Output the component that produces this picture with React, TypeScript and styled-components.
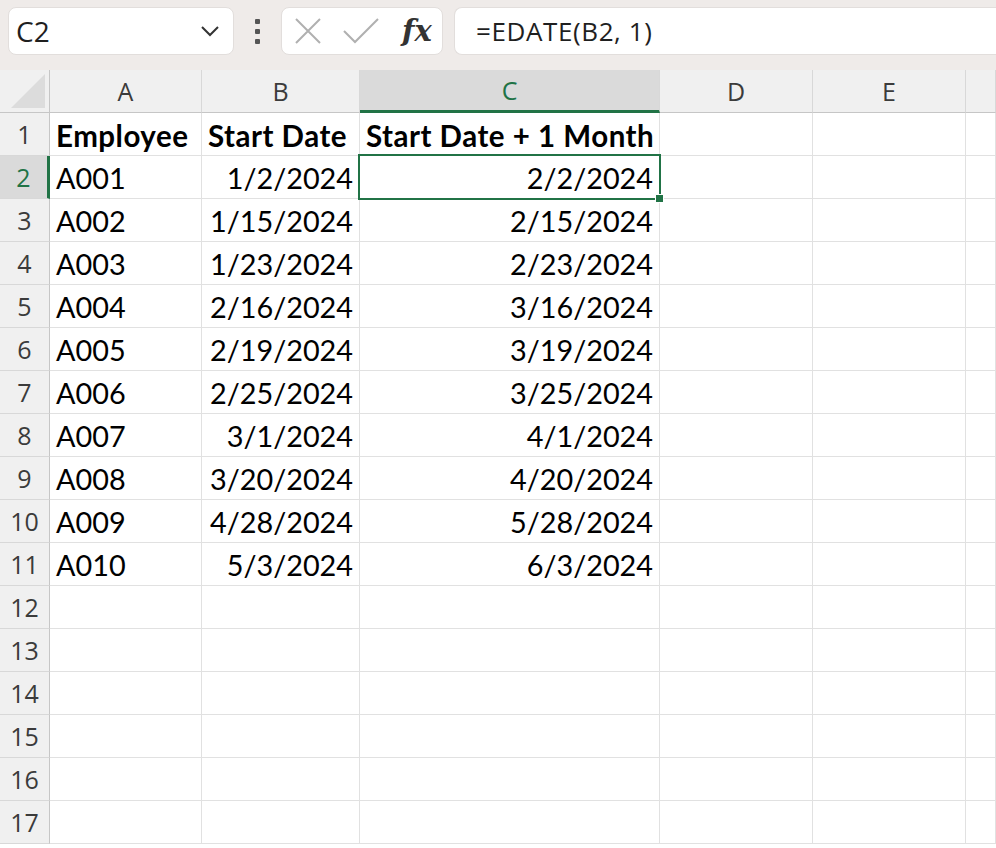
import React from 'react';
import styled, { createGlobalStyle } from 'styled-components';

const GlobalStyle = createGlobalStyle`
  html, body {
    margin: 0;
    padding: 0;
    background: #ffffff;
    overflow: hidden;
  }
  body {
    font-family: 'Open Sans', 'Noto Sans', sans-serif;
  }
`;

const GREEN = '#217346';
const COLS = '50px 152px 158px 300px 153px 153px 30px';

const Page = styled.div`
  width: 996px;
  height: 848px;
  overflow: hidden;
  background: #fff;
`;

const Toolbar = styled.div`
  display: flex;
  align-items: center;
  height: 70px;
  padding: 0 0 8px 8px;
  box-sizing: border-box;
  background: #efebe9;
`;

const Box = styled.div<{ $w?: number }>`
  display: flex;
  align-items: center;
  height: 48px;
  width: ${(p) => (p.$w ? `${p.$w}px` : 'auto')};
  flex: ${(p) => (p.$w ? 'none' : '1')};
  box-sizing: border-box;
  background: #fff;
  border: 1px solid #e2dedc;
  border-radius: 8px;
`;

const NameBox = styled(Box)`
  justify-content: space-between;
  padding: 0 12px 0 7px;
  font-size: 28px;
  color: #1f1f1f;
`;

const Dots = styled.div`
  width: 47px;
  display: flex;
  flex-direction: column;
  align-items: center;
  gap: 5px;
  span {
    width: 5px;
    height: 5px;
    background: #555;
    border-radius: 1px;
  }
`;

const FxBox = styled(Box)`
  padding: 0 10px 0 12px;
  gap: 20px;
  margin-right: 11px;
`;

const FormulaBox = styled(Box)`
  border-right: none;
  border-radius: 8px 0 0 8px;
  padding-left: 21px;
  font-size: 26px;
  letter-spacing: 0.6px;
  color: #1f1f1f;
`;

const FxLabel = styled.span`
  font-family: 'DejaVu Serif', 'Liberation Serif', serif;
  font-style: italic;
  font-weight: bold;
  font-size: 29px;
  color: #333;
  margin-left: 2px;
`;

const Grid = styled.div`
  display: grid;
  grid-template-columns: ${COLS};
  grid-auto-rows: 43px;
`;

const Corner = styled.div`
  background: #f0f0f0;
  border-right: 1px solid #c6c6c6;
  border-bottom: 1px solid #c6c6c6;
  position: relative;
  &::after {
    content: '';
    position: absolute;
    right: 4px;
    bottom: 4px;
    width: 0;
    height: 0;
    border-left: 34px solid transparent;
    border-bottom: 34px solid #dcdcdc;
  }
`;

const ColHead = styled.div<{ $active?: boolean }>`
  display: flex;
  align-items: center;
  justify-content: center;
  background: ${(p) => (p.$active ? '#dadada' : '#f0f0f0')};
  border-right: 1px solid #d8d8d8;
  border-bottom: ${(p) => (p.$active ? `3px solid ${GREEN}` : '1px solid #c6c6c6')};
  box-sizing: border-box;
  font-size: 25px;
  color: ${(p) => (p.$active ? GREEN : '#3b3b3b')};
`;

const RowHead = styled.div<{ $active?: boolean }>`
  display: flex;
  align-items: center;
  justify-content: center;
  background: ${(p) => (p.$active ? '#dadada' : '#f0f0f0')};
  border-right: ${(p) => (p.$active ? `3px solid ${GREEN}` : '1px solid #c6c6c6')};
  border-bottom: 1px solid #d8d8d8;
  box-sizing: border-box;
  font-size: 25px;
  color: ${(p) => (p.$active ? GREEN : '#3b3b3b')};
`;

const Cell = styled.div<{ $align?: 'left' | 'right'; $bold?: boolean; $selected?: boolean }>`
  position: relative;
  display: flex;
  align-items: center;
  justify-content: ${(p) => (p.$align === 'right' ? 'flex-end' : 'flex-start')};
  padding: 2px 6px 0 6px;
  border-right: 1px solid #e1e1e1;
  border-bottom: 1px solid #e1e1e1;
  box-sizing: border-box;
  font-family: 'Lato', 'Open Sans', sans-serif;
  font-size: ${(p) => (p.$bold ? '29.5px' : '28.8px')};
  font-weight: ${(p) => (p.$bold ? 700 : 400)};
  letter-spacing: ${(p) => (p.$bold ? '0.5px' : '0')};
  color: #000;
  white-space: nowrap;
  ${(p) =>
    p.$selected &&
    `
    &::before {
      content: '';
      position: absolute;
      left: -2px;
      top: -2px;
      right: -2px;
      bottom: -2px;
      border: 2px solid ${GREEN};
      z-index: 2;
    }
    &::after {
      content: '';
      position: absolute;
      right: -5px;
      bottom: -5px;
      width: 7px;
      height: 7px;
      background: ${GREEN};
      border: 1px solid #fff;
      z-index: 3;
    }
  `}
`;

const rows: [string, string, string][] = [
  ['A001', '1/2/2024', '2/2/2024'],
  ['A002', '1/15/2024', '2/15/2024'],
  ['A003', '1/23/2024', '2/23/2024'],
  ['A004', '2/16/2024', '3/16/2024'],
  ['A005', '2/19/2024', '3/19/2024'],
  ['A006', '2/25/2024', '3/25/2024'],
  ['A007', '3/1/2024', '4/1/2024'],
  ['A008', '3/20/2024', '4/20/2024'],
  ['A009', '4/28/2024', '5/28/2024'],
  ['A010', '5/3/2024', '6/3/2024'],
];

const letters = ['A', 'B', 'C', 'D', 'E', ''];

const App = () => {
  const body: React.ReactNode[] = [];
  for (let r = 1; r <= 17; r++) {
    body.push(
      <RowHead key={`h${r}`} $active={r === 2}>
        {r}
      </RowHead>
    );
    if (r === 1) {
      body.push(<Cell key="a1" $bold>Employee</Cell>);
      body.push(<Cell key="b1" $bold>Start Date</Cell>);
      body.push(<Cell key="c1" $bold>Start Date + 1 Month</Cell>);
    } else if (r <= 11) {
      const d = rows[r - 2];
      body.push(<Cell key={`a${r}`}>{d[0]}</Cell>);
      body.push(<Cell key={`b${r}`} $align="right">{d[1]}</Cell>);
      body.push(
        <Cell key={`c${r}`} $align="right" $selected={r === 2}>
          {d[2]}
        </Cell>
      );
    } else {
      body.push(<Cell key={`a${r}`} />);
      body.push(<Cell key={`b${r}`} />);
      body.push(<Cell key={`c${r}`} />);
    }
    body.push(<Cell key={`d${r}`} />);
    body.push(<Cell key={`e${r}`} />);
    body.push(<Cell key={`f${r}`} />);
  }

  return (
    <Page>
      <GlobalStyle />
      <Toolbar>
        <NameBox $w={226}>
          <span>C2</span>
          <svg width="22" height="14" viewBox="0 0 22 14">
            <path d="M3 3 L11 11 L19 3" fill="none" stroke="#333" strokeWidth="2" />
          </svg>
        </NameBox>
        <Dots>
          <span />
          <span />
          <span />
        </Dots>
        <FxBox $w={162}>
          <svg width="28" height="28" viewBox="0 0 28 28">
            <path d="M2 2 L26 26 M26 2 L2 26" stroke="#b0b0b0" strokeWidth="2" fill="none" />
          </svg>
          <svg width="38" height="28" viewBox="0 0 38 28">
            <path d="M2 14 L13 25 L36 2" stroke="#b0b0b0" strokeWidth="2" fill="none" />
          </svg>
          <FxLabel>fx</FxLabel>
        </FxBox>
        <FormulaBox>=EDATE(B2, 1)</FormulaBox>
      </Toolbar>
      <Grid>
        <Corner />
        {letters.map((l) => (
          <ColHead key={l || 'f'} $active={l === 'C'}>
            {l}
          </ColHead>
        ))}
        {body}
      </Grid>
    </Page>
  );
};

export default App;
